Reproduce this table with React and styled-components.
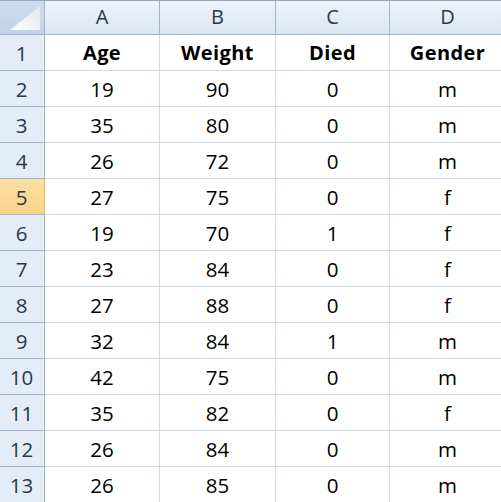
import React from 'react'
import styled, { createGlobalStyle } from 'styled-components'

const Global = createGlobalStyle`
    html, body {
        margin: 0;
        padding: 0;
        background: #fff;
        overflow: hidden;
    }
`

const Sheet = styled.div`
    display: grid;
    grid-template-columns: 45px 115px 116px 114px 116px;
    grid-template-rows: 34px repeat(13, 36px);
    width: 506px;
    font-family: "Open Sans", Lato, sans-serif;
    border-top: 1px solid #8fa9c6;
    box-sizing: border-box;
`

const Corner = styled.div`
    position: relative;
    background: linear-gradient(#cfdcef, #c1d3ea);
    border-right: 1px solid #9eb6ce;
    border-bottom: 1px solid #9eb6ce;
    box-sizing: border-box;
    svg {
        position: absolute;
        right: 4px;
        bottom: 4px;
    }
`

const ColHead = styled.div`
    display: flex;
    align-items: center;
    justify-content: center;
    background: linear-gradient(#eef3fa, #dbe5f2);
    border-right: 1px solid #9eb6ce;
    border-bottom: 1px solid #9eb6ce;
    box-sizing: border-box;
    color: #27394d;
    font-size: 20px;
    padding-bottom: 2px;
`

const RowHead = styled.div`
    display: flex;
    align-items: center;
    justify-content: center;
    background: ${p => p.$active ? 'linear-gradient(#fbe0a3, #f8d38a)' : '#e4ecf7'};
    border-right: 1px solid ${p => p.$active ? '#f2b450' : '#9eb6ce'};
    border-bottom: 1px solid #9eb6ce;
    box-sizing: border-box;
    color: #27394d;
    font-size: 20.5px;
    padding-right: 1px;
`

const Cell = styled.div`
    display: flex;
    align-items: center;
    justify-content: center;
    border-right: 1px solid #d0d7e5;
    border-bottom: 1px solid #d0d7e5;
    box-sizing: border-box;
    color: #000;
    font-size: ${p => p.$bold ? '20px' : '20.5px'};
    font-weight: ${p => p.$bold ? 700 : 400};
    letter-spacing: ${p => p.$bold ? '0.4px' : '0'};
`

const cols = ['A', 'B', 'C', 'D']
const header = ['Age', 'Weight', 'Died', 'Gender']
const rows = [
    [19, 90, 0, 'm'],
    [35, 80, 0, 'm'],
    [26, 72, 0, 'm'],
    [27, 75, 0, 'f'],
    [19, 70, 1, 'f'],
    [23, 84, 0, 'f'],
    [27, 88, 0, 'f'],
    [32, 84, 1, 'm'],
    [42, 75, 0, 'm'],
    [35, 82, 0, 'f'],
    [26, 84, 0, 'm'],
    [26, 85, 0, 'm'],
]

export default function App() {
    return (
        <>
            <Global />
            <Sheet>
                <Corner>
                    <svg width="30" height="24" viewBox="0 0 30 24">
                        <defs>
                            <linearGradient id="tri" x1="0" y1="1" x2="1" y2="0">
                                <stop offset="0" stopColor="#ffffff" />
                                <stop offset="1" stopColor="#dfe6ef" />
                            </linearGradient>
                        </defs>
                        <polygon points="30,0 30,24 0,24" fill="url(#tri)" />
                    </svg>
                </Corner>
                {cols.map(c => <ColHead key={c}>{c}</ColHead>)}

                <RowHead>1</RowHead>
                {header.map(h => <Cell key={h} $bold>{h}</Cell>)}

                {rows.map((r, i) => (
                    <React.Fragment key={i}>
                        <RowHead $active={i + 2 === 5}>{i + 2}</RowHead>
                        {r.map((v, j) => <Cell key={j}>{v}</Cell>)}
                    </React.Fragment>
                ))}
            </Sheet>
        </>
    )
}
